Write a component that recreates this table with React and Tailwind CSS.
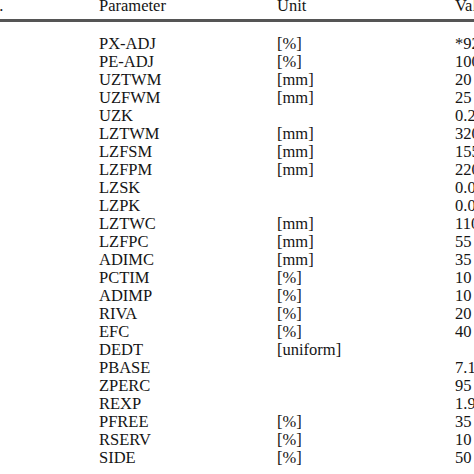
const ROWS = [
  ["PX-ADJ", "[%]", "*92.5"],
  ["PE-ADJ", "[%]", "100"],
  ["UZTWM", "[mm]", "20"],
  ["UZFWM", "[mm]", "25"],
  ["UZK", "", "0.25"],
  ["LZTWM", "[mm]", "320"],
  ["LZFSM", "[mm]", "155"],
  ["LZFPM", "[mm]", "220"],
  ["LZSK", "", "0.03"],
  ["LZPK", "", "0.02"],
  ["LZTWC", "[mm]", "110"],
  ["LZFPC", "[mm]", "55"],
  ["ADIMC", "[mm]", "35"],
  ["PCTIM", "[%]", "10"],
  ["ADIMP", "[%]", "10"],
  ["RIVA", "[%]", "20"],
  ["EFC", "[%]", "40"],
  ["DEDT", "[uniform]", ""],
  ["PBASE", "", "7.1"],
  ["ZPERC", "", "95"],
  ["REXP", "", "1.9"],
  ["PFREE", "[%]", "35"],
  ["RSERV", "[%]", "10"],
  ["SIDE", "[%]", "50"],
];

export default function App() {
  return (
    <div className="w-[474px] h-[474px] overflow-hidden bg-white text-[#151515] font-['Liberation_Serif',serif] text-[16.5px] leading-[18px]">
      {/* header */}
      <div className="-mt-[3.5px] grid grid-cols-[99px_178px_178px_auto] whitespace-nowrap">
        <div className="-ml-[21px]">No.</div>
        <div>Parameter</div>
        <div>Unit</div>
        <div>Value</div>
      </div>
      <div className="mt-[4.5px] h-[3px] bg-[#555]" />

      {/* body */}
      <div className="mt-[13.4px] grid grid-cols-[99px_178px_178px_auto] whitespace-nowrap">
        {ROWS.map(([name, unit, value]) => (
          <div key={name} className="contents">
            <div className="h-[18px]" />
            <div className="h-[18px]">{name}</div>
            <div className="h-[18px]">{unit}</div>
            <div className="h-[18px]">{value}</div>
          </div>
        ))}
      </div>
    </div>
  );
}
